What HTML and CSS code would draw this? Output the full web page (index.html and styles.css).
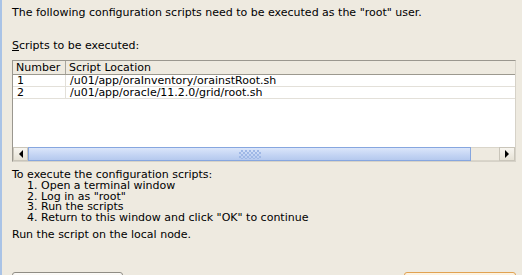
FILE: index.html
```html
<!DOCTYPE html>
<html lang="en">
<head>
    <meta charset="UTF-8">
    <title>Execute Configuration scripts</title>
    <link rel="stylesheet" href="styles.css">
</head>
<body>
    <div class="dialog">
        <p class="intro">The following configuration scripts need to be executed as the "root" user.</p>
        <div class="label"><u>S</u>cripts to be executed:</div>

        <!-- Scripts table -->
        <div class="scroll-pane">
            <div class="viewport">
                <table class="scripts">
                    <thead>
                        <tr><th class="col-num">Number</th><th>Script Location</th></tr>
                    </thead>
                    <tbody>
                        <tr><td>1</td><td>/u01/app/oraInventory/orainstRoot.sh</td></tr>
                        <tr><td>2</td><td>/u01/app/oracle/11.2.0/grid/root.sh</td></tr>
                    </tbody>
                </table>
            </div>
            <div class="hscroll">
                <div class="arrow-btn"><span class="tri tri-left"></span></div>
                <div class="thumb"><span class="grip"></span></div>
                <div class="track"></div>
                <div class="arrow-btn arrow-right"><span class="tri tri-right"></span></div>
            </div>
        </div>

        <!-- Instructions -->
        <div class="steps">
            <div>To execute the configuration scripts:</div>
            <div class="step-list">
                <div>1. Open a terminal window</div>
                <div>2. Log in as "root"</div>
                <div>3. Run the scripts</div>
                <div>4. Return to this window and click "OK" to continue</div>
            </div>
        </div>
        <div class="node">Run the script on the local node.</div>

        <!-- Buttons are cut off by the window edge, labels are below it -->
        <div class="buttons">
            <button class="btn" aria-label="Help"></button>
            <button class="btn btn-default" aria-label="OK"></button>
        </div>
    </div>
</body>
</html>
```

FILE: styles.css
```css
body {
    margin: 0;
    background-color: #eeeae0;
    font-family: "DejaVu Sans", sans-serif;
    font-size: 11px;
    color: #000;
}
.dialog {
    height: 275px;
    box-sizing: border-box;
    overflow: hidden;
    border-left: 2px solid #a9c3e6;
    padding: 6px 6px 0 10px;
}
.intro {
    margin: 0;
    line-height: 14px;
}
.label {
    margin-top: 19px;
    line-height: 13px;
}
.scroll-pane {
    margin-top: 8px;
    border: 1px solid;
    border-color: #9a978f #d6d2c8 #d6d2c8 #9a978f;
}
.viewport {
    height: 86px;
    background: white;
    overflow: hidden;
}
.scripts {
    width: 100%;
    border-collapse: collapse;
}
.scripts th {
    height: 13px;
    padding: 0 3px;
    line-height: 13px;
    font-weight: normal;
    text-align: left;
    background-color: #eeeae0;
    border-right: 1px solid #a9a69d;
    border-bottom: 1px solid #9c998f;
}
.scripts th:last-child {
    border-right: none;
}
.scripts .col-num {
    width: 46px;
}
.scripts td {
    height: 11px;
    padding: 0 4px;
    line-height: 11px;
    border-right: 1px solid #e3e0d9;
    border-bottom: 1px solid #e3e0d9;
}
.scripts td:last-child {
    border-right: none;
}
.hscroll {
    display: flex;
    height: 14px;
    background-color: #eeeae0;
}
.arrow-btn {
    width: 15px;
    box-sizing: border-box;
    display: flex;
    align-items: center;
    justify-content: center;
    background: linear-gradient(#f8f6f0, #e6e2d6);
    border: 1px solid #c9c5ba;
}
.arrow-right {
    width: 16px;
}
.tri {
    width: 0;
    height: 0;
    border-top: 4px solid transparent;
    border-bottom: 4px solid transparent;
}
.tri-left {
    border-right: 4px solid #000;
}
.tri-right {
    border-left: 4px solid #000;
}
.thumb {
    width: 443px;
    box-sizing: border-box;
    display: flex;
    align-items: center;
    justify-content: center;
    background: linear-gradient(#dbe6fa, #c3d4f3 60%, #b5c9ee);
    border: 1px solid #86a6df;
}
.grip {
    width: 22px;
    height: 9px;
    background: repeating-conic-gradient(#9fb8e6 0 25%, transparent 0 50%) 0 0 / 4px 4px;
}
.track {
    flex: 1;
    border-top: 1px solid #d9d5ca;
    border-bottom: 1px solid #d9d5ca;
}
.steps {
    margin-top: 8px;
    line-height: 10.8px;
}
.step-list {
    padding-left: 15px;
}
.node {
    margin-top: 6px;
    line-height: 10.8px;
}
.buttons {
    display: flex;
    justify-content: space-between;
    margin-top: 31px;
}
.btn {
    width: 111px;
    height: 24px;
    background: linear-gradient(#fbfaf7, #ebe8df);
    border: 1px solid #8f8c84;
    border-radius: 3px;
}
.btn-default {
    width: 112px;
    border-color: #e1a251;
    background: linear-gradient(#fdf3e2, #f1e3c8);
}
```
